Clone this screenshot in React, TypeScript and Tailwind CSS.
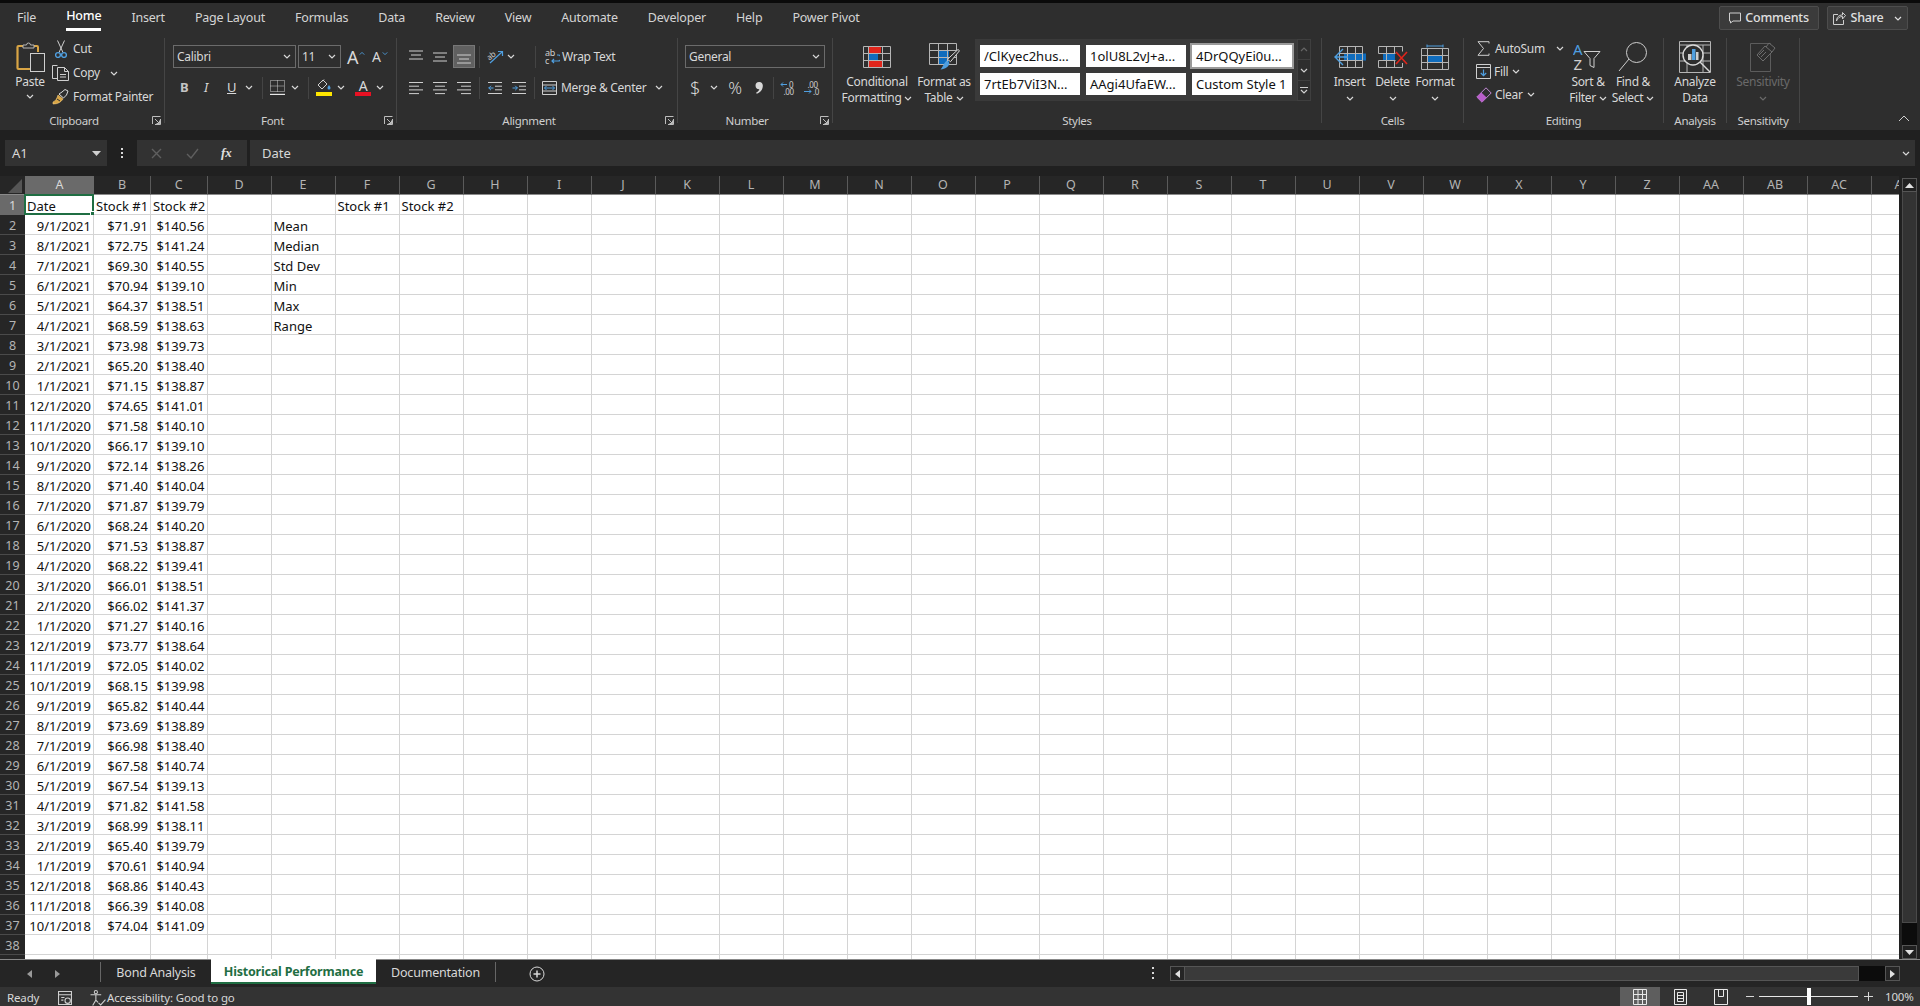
import React from 'react';

const rows: [string, string, string][] = [
  ['9/1/2021', '$71.91', '$140.56'], ['8/1/2021', '$72.75', '$141.24'], ['7/1/2021', '$69.30', '$140.55'],
  ['6/1/2021', '$70.94', '$139.10'], ['5/1/2021', '$64.37', '$138.51'], ['4/1/2021', '$68.59', '$138.63'],
  ['3/1/2021', '$73.98', '$139.73'], ['2/1/2021', '$65.20', '$138.40'], ['1/1/2021', '$71.15', '$138.87'],
  ['12/1/2020', '$74.65', '$141.01'], ['11/1/2020', '$71.58', '$140.10'], ['10/1/2020', '$66.17', '$139.10'],
  ['9/1/2020', '$72.14', '$138.26'], ['8/1/2020', '$71.40', '$140.04'], ['7/1/2020', '$71.87', '$139.79'],
  ['6/1/2020', '$68.24', '$140.20'], ['5/1/2020', '$71.53', '$138.87'], ['4/1/2020', '$68.22', '$139.41'],
  ['3/1/2020', '$66.01', '$138.51'], ['2/1/2020', '$66.02', '$141.37'], ['1/1/2020', '$71.27', '$140.16'],
  ['12/1/2019', '$73.77', '$138.64'], ['11/1/2019', '$72.05', '$140.02'], ['10/1/2019', '$68.15', '$139.98'],
  ['9/1/2019', '$65.82', '$140.44'], ['8/1/2019', '$73.69', '$138.89'], ['7/1/2019', '$66.98', '$138.40'],
  ['6/1/2019', '$67.58', '$140.74'], ['5/1/2019', '$67.54', '$139.13'], ['4/1/2019', '$71.82', '$141.58'],
  ['3/1/2019', '$68.99', '$138.11'], ['2/1/2019', '$65.40', '$139.79'], ['1/1/2019', '$70.61', '$140.94'],
  ['12/1/2018', '$68.86', '$140.43'], ['11/1/2018', '$66.39', '$140.08'], ['10/1/2018', '$74.04', '$141.09'],
];

const statsLabels = ['Mean', 'Median', 'Std Dev', 'Min', 'Max', 'Range'];
const tabs = ['File', 'Home', 'Insert', 'Page Layout', 'Formulas', 'Data', 'Review', 'View', 'Automate', 'Developer', 'Help', 'Power Pivot'];
const columns = ['A','B','C','D','E','F','G','H','I','J','K','L','M','N','O','P','Q','R','S','T','U','V','W','X','Y','Z','AA','AB','AC','AD'];

// small dropdown caret used all over the ribbon
const Chev = ({ className = '' }: { className?: string }) => (
  <svg width="8" height="5" viewBox="0 0 8 5" className={`shrink-0 ${className}`}>
    <path d="M1 1l3 3 3-3" stroke="currentColor" fill="none" strokeWidth="1.2" />
  </svg>
);

const Launcher = () => (
  <svg width="9" height="9" viewBox="0 0 9 9" className="absolute right-[3px] bottom-[5px] text-[#bdbdbd]">
    <path d="M0.5 8V0.5H8.5M8.5 3V8.5H3M3 3l4.5 4.5M7.5 4.5v3h-3" stroke="currentColor" fill="none" />
  </svg>
);

const Sep = () => <div className="w-px my-[7px] bg-[#454545] shrink-0" />;
const VSep = ({ className = '' }: { className?: string }) => <div className={`w-px h-[22px] bg-[#444] shrink-0 ${className}`} />;

const Group = ({ label, launcher, className, children }: { label: string; launcher?: boolean; className: string; children: React.ReactNode }) => (
  <div className={`relative flex flex-col shrink-0 ${className}`}>
    <div className="h-[81px]">{children}</div>
    <div className={`h-[18px] leading-[18px] text-center text-[11.5px] text-[#cfcfcf] ${launcher ? 'pr-[16px]' : ''}`}>{label}</div>
    {launcher && <Launcher />}
  </div>
);

const Big = ({ icon, line1, line2, chev, className = '', dim }: { icon: React.ReactNode; line1: string; line2?: string; chev?: boolean; className?: string; dim?: boolean }) => (
  <div className={`flex flex-col items-center shrink-0 ${dim ? 'text-[#6a6a6a]' : 'text-[#d8d8d8]'} ${className}`}>
    <div className="h-[35px] mt-[8px] flex items-center justify-center">{icon}</div>
    <div className="h-[16px] leading-[16px] text-[12px] whitespace-nowrap">{line1}</div>
    <div className="h-[16px] leading-[16px] text-[12px] whitespace-nowrap flex items-center gap-[3px]">
      {line2}
      {chev && <Chev />}
    </div>
  </div>
);

const Combo = ({ text, className }: { text: string; className: string }) => (
  <div className={`h-[23px] flex items-center justify-between pl-[3px] pr-[4px] border border-[#6b6b6b] text-[12px] text-[#d8d8d8] ${className}`}>
    <span>{text}</span>
    <Chev />
  </div>
);

const Lines = ({ widths, aligned }: { widths: number[]; aligned: 'l' | 'c' | 'r' }) => (
  <svg width="14" height="14" viewBox="0 0 14 14" className="shrink-0">
    {widths.map((w, i) => {
      const x = aligned === 'l' ? 0 : aligned === 'r' ? 14 - w : (14 - w) / 2;
      return <path key={i} d={`M${x} ${1.5 + i * 3.7}h${w}`} stroke="#cfcfcf" />;
    })}
  </svg>
);

const VAlign = ({ y }: { y: number }) => (
  <svg width="14" height="14" viewBox="0 0 14 14" className="shrink-0">
    <path d={`M0 ${y}h14M2 ${y + 4}h10M0 ${y + 8}h14`} stroke="#cfcfcf" />
  </svg>
);

const PasteIcon = () => (
  <svg width="30" height="32" viewBox="0 0 30 32" className="shrink-0">
    <path d="M8 5H3.5a1 1 0 0 0-1 1v21a1 1 0 0 0 1 1H15" stroke="#d9a545" strokeWidth="2.2" fill="none" />
    <path d="M19 5h3a1 1 0 0 1 1 1v5" stroke="#d9a545" strokeWidth="2" fill="none" />
    <path d="M8 7V4h3.5a2 2 0 0 1 4 0H19v3z" stroke="#b5b5b5" fill="#2e2e2e" />
    <rect x="15.5" y="12.5" width="14" height="18" stroke="#cfcfcf" fill="#2e2e2e" />
  </svg>
);

const CutIcon = () => (
  <svg width="12" height="18" viewBox="0 0 12 18" className="shrink-0">
    <path d="M2.5 0.5l5.5 12M9.5 0.5l-5.5 12" stroke="#cfcfcf" fill="none" />
    <circle cx="3" cy="15" r="2.4" stroke="#4f9fe0" fill="none" strokeWidth="1.4" />
    <circle cx="9" cy="15" r="2.4" stroke="#4f9fe0" fill="none" strokeWidth="1.4" />
  </svg>
);

const CopyIcon = () => (
  <svg width="17" height="16" viewBox="0 0 17 16" className="shrink-0">
    <path d="M5.5 0.5H0.5V13.5H5" stroke="#cfcfcf" fill="none" />
    <path d="M5.5 2.5h7l4 4v9h-11zM12.5 2.5v4h4M8 9.5h6M8 12h6" stroke="#cfcfcf" fill="none" />
  </svg>
);

const PainterIcon = () => (
  <svg width="17" height="16" viewBox="0 0 17 16" className="shrink-0">
    <path d="M1 13c3-1 4-4 5-7l5 4c-2 3-5 5-10 5z" fill="#d9a545" stroke="#f0c878" strokeWidth="0.6" />
    <path d="M7 5l3-2 3-2.5 3 1.5-1.5 4-3 3z" stroke="#dcdcdc" fill="#2e2e2e" />
    <path d="M5 10l3 2" stroke="#2e2e2e" />
  </svg>
);

const BordersIcon = () => (
  <svg width="15" height="15" viewBox="0 0 15 15" className="shrink-0">
    <path d="M0.5 0.5h14v11H0.5zM7.5 0.5v11M0.5 6h14" stroke="#cfcfcf" strokeDasharray="1 1" fill="none" />
    <path d="M0 14.5h15" stroke="#e8e8e8" strokeWidth="1.4" />
  </svg>
);

const FillIcon = () => (
  <svg width="16" height="17" viewBox="0 0 16 17" className="shrink-0">
    <path d="M7 1l-5 5 4 4 5-5zM8 0.5l-2 2" stroke="#cfcfcf" fill="none" />
    <path d="M13 6c1 1.5 1.5 2.2 1.5 3a1.5 1.5 0 0 1-3 0c0-.8.5-1.5 1.5-3z" fill="#4f9fe0" />
    <rect x="0" y="13" width="16" height="4" fill="#ffe600" />
  </svg>
);

const FontColorIcon = () => (
  <div className="w-[16px] h-[17px] flex flex-col items-center shrink-0">
    <span className="text-[14px] leading-[13px] text-[#d8d8d8]">A</span>
    <div className="w-[16px] h-[4px] bg-[#e81123]" />
  </div>
);

const OrientIcon = () => (
  <svg width="17" height="16" viewBox="0 0 17 16" className="shrink-0">
    <text x="0" y="9" fontSize="8" fill="#cfcfcf" transform="rotate(-38 5 7)" fontFamily="Noto Sans">ab</text>
    <path d="M3 14L15 3M11 2.5h4.5V7" stroke="#4f9fe0" fill="none" strokeWidth="1.2" />
  </svg>
);

const WrapIcon = () => (
  <svg width="15" height="17" viewBox="0 0 15 17" className="shrink-0">
    <text x="0" y="7.5" fontSize="9" fill="#cfcfcf" fontFamily="Noto Sans">ab</text>
    <text x="0" y="16" fontSize="9" fill="#cfcfcf" fontFamily="Noto Sans">c</text>
    <path d="M12 7h1a2 2 0 0 1 0 6H7M9 11l-2 2 2 2" stroke="#4f9fe0" fill="none" strokeWidth="1.2" />
  </svg>
);

const MergeIcon = () => (
  <svg width="15" height="14" viewBox="0 0 15 14" className="shrink-0">
    <path d="M0.5 0.5h14v13H0.5zM0.5 4h14M0.5 10h14" stroke="#cfcfcf" fill="none" />
    <path d="M2.5 7h10M4.5 5l-2 2 2 2M10.5 5l2 2-2 2" stroke="#4f9fe0" fill="none" />
  </svg>
);

const IndentIcon = ({ dir }: { dir: 'dec' | 'inc' }) => (
  <svg width="14" height="14" viewBox="0 0 14 14" className="shrink-0">
    <path d="M0 1.5h14M0 12.5h14M7 5.2h7M7 8.8h7" stroke="#cfcfcf" />
    <path d={dir === 'dec' ? 'M0.5 7h5M3 4.8L0.8 7 3 9.2' : 'M0.5 7h5M3.2 4.8L5.4 7 3.2 9.2'} stroke="#4f9fe0" fill="none" />
  </svg>
);

const DecimalIcon = ({ mode }: { mode: 'inc' | 'dec' }) => (
  <svg width="19" height="16" viewBox="0 0 19 16" className="shrink-0">
    {mode === 'inc' ? (
      <>
        <path d="M7 4.5H1M3 2.5l-2 2 2 2" stroke="#4f9fe0" fill="none" />
        <text x="9" y="7.5" fontSize="8" fill="#cfcfcf" fontFamily="Noto Sans">0</text>
        <text x="3.5" y="15" fontSize="8" fill="#cfcfcf" fontFamily="Noto Sans">.00</text>
      </>
    ) : (
      <>
        <text x="3.5" y="7.5" fontSize="8" fill="#cfcfcf" fontFamily="Noto Sans">.00</text>
        <path d="M0 11.5h7M5 9.5l2 2-2 2" stroke="#4f9fe0" fill="none" />
        <text x="9" y="15" fontSize="8" fill="#cfcfcf" fontFamily="Noto Sans">.0</text>
      </>
    )}
  </svg>
);

const CondIcon = () => (
  <svg width="28" height="22" viewBox="0 0 28 22">
    <rect x="5" y="0" width="13" height="7.5" fill="#e1251b" />
    <rect x="5" y="7.5" width="10" height="7" fill="#0f6cbd" />
    <rect x="5" y="14.5" width="15" height="7.5" fill="#e1251b" />
    <path d="M0.5 0.5h27v21H0.5zM0.5 7.5h27M0.5 14.5h27M5.5 0.5v21M19.5 0.5v21" stroke="#b5b5b5" fill="none" />
  </svg>
);

const TableIcon = () => (
  <svg width="31" height="28" viewBox="0 0 31 28">
    <rect x="10" y="8" width="10" height="13" fill="#0f6cbd" />
    <path d="M0.5 0.5h27v21H0.5zM0.5 7.5h27M0.5 14.5h27M9.5 0.5v21M18.5 0.5v21" stroke="#b5b5b5" fill="none" />
    <path d="M29 6.5l1.5 1.2-9 11-3-2.4z" fill="#2e2e2e" stroke="#d8d8d8" />
    <path d="M17.5 17.5l3 2.5c-1 4-4 6-9 6.5 2-2 3-6 6-9z" fill="#4f9fe0" />
  </svg>
);

const GridBase = () => <path d="M5.5 0.5h23v21h-23zM5.5 7.5h23M5.5 14.5h23M13.5 0.5v21M21.5 0.5v21" stroke="#b5b5b5" fill="none" />;

const InsertIcon = () => (
  <svg width="32" height="22" viewBox="0 0 32 22">
    <rect x="10" y="7.5" width="22" height="7" fill="#0f6cbd" />
    <GridBase />
    <path d="M9 3L1 11l8 8M1 11h13" stroke="#4f9fe0" fill="none" strokeWidth="1.4" />
  </svg>
);

const DeleteIcon = () => (
  <svg width="30" height="22" viewBox="0 0 30 22">
    <rect x="5" y="7.5" width="12" height="7" fill="#0f6cbd" />
    <path d="M0.5 0.5h24M0.5 21.5h24M0.5 0.5v7M0.5 14.5v7M24.5 0.5v5M24.5 17v4.5M0.5 7.5h17M0.5 14.5h17M8.5 0.5v21M16.5 0.5v7M16.5 14.5v7" stroke="#b5b5b5" fill="none" />
    <path d="M18 6l11 12M29 6L18 18" stroke="#e1251b" strokeWidth="1.6" />
  </svg>
);

const FormatIcon = () => (
  <svg width="28" height="26" viewBox="0 0 28 26">
    <path d="M6 0.5v3M22 0.5v3M6 2h16" stroke="#4f9fe0" />
    <rect x="7" y="11.5" width="14" height="7" fill="#0f6cbd" />
    <path d="M0.5 4.5h27v21H0.5zM0.5 11.5h27M0.5 18.5h27M6.5 4.5v21M21.5 4.5v21" stroke="#b5b5b5" fill="none" />
  </svg>
);

const SumIcon = () => (
  <svg width="13" height="15" viewBox="0 0 13 15" className="shrink-0">
    <path d="M12 2.5V0.7H1l5.5 6.8L1 14.3h11v-1.8" stroke="#cfcfcf" fill="none" />
  </svg>
);

const FillDownIcon = () => (
  <svg width="15" height="15" viewBox="0 0 15 15" className="shrink-0">
    <path d="M0.5 0.5h14v14H0.5zM0.5 3.5h14" stroke="#cfcfcf" fill="none" />
    <path d="M7.5 5.5v6M4.8 9l2.7 2.7L10.2 9" stroke="#4f9fe0" fill="none" strokeWidth="1.2" />
  </svg>
);

const ClearIcon = () => (
  <svg width="16" height="16" viewBox="0 0 16 16" className="shrink-0">
    <path d="M10 0.8L15.2 6 6 15.2 0.8 10z" fill="#2e2e2e" stroke="#c38ad6" />
    <path d="M0.8 10l4.6-4.6 5.2 5.2L6 15.2z" fill="#b85ec9" />
  </svg>
);

const SortIcon = () => (
  <svg width="30" height="30" viewBox="0 0 30 30">
    <text x="0" y="13" fontSize="15" fill="#4f9fe0" fontFamily="Noto Sans">A</text>
    <text x="0.5" y="28" fontSize="15" fill="#cfcfcf" fontFamily="Noto Sans">Z</text>
    <path d="M11 9.5h16l-6 7v9l-4-2v-7z" stroke="#cfcfcf" fill="none" />
  </svg>
);

const FindIcon = () => (
  <svg width="30" height="31" viewBox="0 0 30 31">
    <circle cx="18.5" cy="11.5" r="10" stroke="#cfcfcf" fill="none" />
    <path d="M11 18L1 30" stroke="#cfcfcf" />
  </svg>
);

const AnalyzeIcon = () => (
  <svg width="32" height="32" viewBox="0 0 32 32">
    <path d="M0.5 0.5h31v31H0.5zM0.5 4h31M0.5 12h31M0.5 20h31M8 4v27M24 4v27" stroke="#b5b5b5" fill="none" />
    <circle cx="14" cy="14" r="10" fill="#2e2e2e" stroke="#d8d8d8" strokeWidth="1.4" />
    <rect x="9" y="13" width="3.5" height="6" fill="#cfcfcf" />
    <rect x="13" y="8" width="3.5" height="11" fill="#4f9fe0" />
    <rect x="17" y="11" width="2.5" height="8" fill="#cfcfcf" />
    <path d="M21 21l10 10" stroke="#d8d8d8" strokeWidth="1.4" />
  </svg>
);

const SensitivityIcon = () => (
  <svg width="27" height="33" viewBox="0 0 27 33">
    <path d="M0.5 3.5h20v28H0.5z" stroke="#5c5c5c" fill="none" />
    <path d="M7 15l8-9 7 6-9 9zM16 7l3-4 6 5-3 4" stroke="#6e6e6e" fill="#2e2e2e" />
    <path d="M9 15l5-5M11 17l5-5" stroke="#6e6e6e" />
  </svg>
);

const CommaIcon = () => (
  <svg width="8" height="12" viewBox="0 0 8 12" className="shrink-0">
    <path d="M4 0a3.6 3.6 0 0 1 3.8 4c0 3.5-2.5 6.5-6 7.8L1 10.8C3 9.5 4 8.5 4.3 7.2A3.6 3.6 0 0 1 4 0z" fill="#d8d8d8" />
  </svg>
);

const SmallAction = ({ icon, label, chev, className = '' }: { icon: React.ReactNode; label: string; chev?: boolean; className?: string }) => (
  <div className={`h-[23px] flex items-center text-[12px] text-[#d8d8d8] whitespace-nowrap ${className}`}>
    {icon}
    <span className="ml-[3px]">{label}</span>
    {chev && <Chev className="ml-[4px]" />}
  </div>
);

const StyleCell = ({ text, selected }: { text: string; selected?: boolean }) => (
  <div className={`w-[100px] h-[22px] bg-white text-[#111] text-[13px] tracking-normal leading-[22px] px-[4px] whitespace-nowrap overflow-hidden ${selected ? 'outline-2 outline-[#9a9a9a]' : ''}`}>
    {text}
  </div>
);

const Ribbon = () => (
  <div className="h-[99px] bg-[#2e2e2e] flex shrink-0">
    <Group label="Clipboard" launcher className="w-[164px]">
      <div className="flex pl-[15px] h-full">
        <div className="flex flex-col items-center w-[30px] pt-[10px] text-[12px] text-[#d8d8d8]">
          <PasteIcon />
          <span className="mt-[1px] leading-[16px]">Paste</span>
          <Chev className="mt-[4px]" />
        </div>
        <div className="flex flex-col ml-[7px] pt-[5px]">
          <SmallAction icon={<div className="w-[18px] flex justify-center"><CutIcon /></div>} label="Cut" className="h-[25px]" />
          <div className="h-[24px] flex items-center text-[12px] text-[#d8d8d8]">
            <div className="w-[18px]"><CopyIcon /></div>
            <span className="ml-[3px]">Copy</span>
            <Chev className="ml-[10px]" />
          </div>
          <SmallAction icon={<div className="w-[18px]"><PainterIcon /></div>} label="Format Painter" className="h-[24px]" />
        </div>
      </div>
    </Group>
    <Sep />
    <Group label="Font" launcher className="w-[231px]">
      <div className="flex flex-col pt-[14px] pl-[8px] gap-[8px] text-[#d8d8d8]">
        <div className="flex items-center h-[23px]">
          <Combo text="Calibri" className="w-[123px]" />
          <Combo text="11" className="w-[43px] ml-[2px]" />
          <div className="ml-[6px] w-[15px] flex items-start">
            <span className="text-[18px] leading-none tracking-normal">A</span>
            <Chev className="rotate-180 text-[#4f9fe0] -ml-[1px] mt-[3px] scale-75" />
          </div>
          <div className="ml-[10px] w-[15px] flex items-start">
            <span className="text-[14px] leading-none tracking-normal">A</span>
            <Chev className="text-[#4f9fe0] mt-[1px] scale-75" />
          </div>
        </div>
        <div className="flex items-center h-[23px] text-[13px]">
          <span className="ml-[7px] w-[9px] font-bold text-[#c4c4c4]">B</span>
          <span className="ml-[15px] w-[8px] italic">I</span>
          <span className="ml-[15px] w-[10px] underline">U</span>
          <Chev className="ml-[8px]" />
          <VSep className="ml-[9px]" />
          <div className="ml-[7px]"><BordersIcon /></div>
          <Chev className="ml-[6px]" />
          <VSep className="ml-[9px]" />
          <div className="ml-[7px]"><FillIcon /></div>
          <Chev className="ml-[5px]" />
          <div className="ml-[10px]"><FontColorIcon /></div>
          <Chev className="ml-[5px]" />
        </div>
      </div>
    </Group>
    <Sep />
    <Group label="Alignment" launcher className="w-[280px]">
      <div className="flex flex-col pt-[14px] pl-[12px] gap-[8px] text-[#d8d8d8]">
        <div className="flex items-center h-[23px] text-[12px]">
          <VAlign y={1} />
          <div className="ml-[10px]"><VAlign y={3} /></div>
          <div className="ml-[6px] w-[22px] h-[23px] bg-[#606060] border border-[#777] flex items-center justify-center"><VAlign y={5} /></div>
          <VSep className="ml-[4px]" />
          <div className="ml-[7px]"><OrientIcon /></div>
          <Chev className="ml-[3px]" />
          <VSep className="ml-[20px]" />
          <div className="ml-[9px]"><WrapIcon /></div>
          <span className="ml-[2px]">Wrap Text</span>
        </div>
        <div className="flex items-center h-[23px] text-[12px]">
          <Lines widths={[14, 10, 14, 10]} aligned="l" />
          <div className="ml-[10px]"><Lines widths={[14, 10, 14, 10]} aligned="c" /></div>
          <div className="ml-[10px]"><Lines widths={[14, 10, 14, 10]} aligned="r" /></div>
          <VSep className="ml-[8px]" />
          <div className="ml-[8px]"><IndentIcon dir="dec" /></div>
          <div className="ml-[10px]"><IndentIcon dir="inc" /></div>
          <VSep className="ml-[8px]" />
          <div className="ml-[7px]"><MergeIcon /></div>
          <span className="ml-[4px]">Merge &amp; Center</span>
          <Chev className="ml-[9px]" />
        </div>
      </div>
    </Group>
    <Sep />
    <Group label="Number" launcher className="w-[154px]">
      <div className="flex flex-col pt-[14px] pl-[7px] gap-[8px] text-[#d8d8d8]">
        <Combo text="General" className="w-[140px]" />
        <div className="flex items-center h-[23px]">
          <span className="w-[20px] text-[18px] font-light leading-none text-center">$</span>
          <Chev className="ml-[5px]" />
          <span className="ml-[8px] w-[18px] text-[17px] font-light leading-none text-center">%</span>
          <div className="ml-[11px]"><CommaIcon /></div>
          <VSep className="ml-[10px]" />
          <div className="ml-[6px]"><DecimalIcon mode="inc" /></div>
          <div className="ml-[5px]"><DecimalIcon mode="dec" /></div>
        </div>
      </div>
    </Group>
    <Sep />
    <Group label="Styles" className="w-[488px]">
      <div className="flex pl-[11px] h-full">
        <Big icon={<CondIcon />} line1="Conditional" line2="Formatting" chev className="w-[66px]" />
        <Big icon={<TableIcon />} line1="Format as" line2="Table" chev className="w-[62px] ml-[3px]" />
        <div className="flex mt-[8px] h-[62px]">
          <div className="w-[322px] bg-[#3a3a3a] grid grid-cols-[100px_100px_100px] gap-x-[6px] gap-y-[6px] pl-[5px] pt-[6px] content-start">
            <StyleCell text="/ClKyec2hus..." />
            <StyleCell text="1olU8L2vJ+a..." />
            <StyleCell text="4DrQQyEi0u..." selected />
            <StyleCell text="7rtEb7ViI3N..." />
            <StyleCell text="AAgi4UfaEW..." />
            <StyleCell text="Custom Style 1" />
          </div>
          <div className="w-[14px] flex flex-col text-[#cfcfcf]">
            <div className="h-[21px] border border-[#3f3f3f] flex items-center justify-center text-[#666]"><Chev className="rotate-180" /></div>
            <div className="h-[20px] border-x border-[#3f3f3f] flex items-center justify-center"><Chev /></div>
            <div className="h-[21px] border border-[#3f3f3f] flex flex-col items-center justify-center gap-[1px]"><div className="w-[8px] h-px bg-[#cfcfcf]" /><Chev /></div>
          </div>
        </div>
      </div>
    </Group>
    <Sep />
    <Group label="Cells" className="w-[141px]">
      <div className="flex pl-[6px]">
        <Big icon={<InsertIcon />} line1="Insert" chev className="w-[43px]" />
        <Big icon={<DeleteIcon />} line1="Delete" chev className="w-[43px]" />
        <Big icon={<FormatIcon />} line1="Format" chev className="w-[42px]" />
      </div>
    </Group>
    <Sep />
    <Group label="Editing" className="w-[199px]">
      <div className="flex pl-[12px]">
        <div className="flex flex-col pt-[6px] w-[89px]">
          <div className="h-[23px] flex items-center text-[12px] text-[#d8d8d8]">
            <div className="w-[17px] pl-[1px]"><SumIcon /></div>
            <span className="ml-[2px]">AutoSum</span>
            <Chev className="ml-[11px]" />
          </div>
          <SmallAction icon={<FillDownIcon />} label="Fill" chev />
          <SmallAction icon={<ClearIcon />} label="Clear" chev />
        </div>
        <Big icon={<SortIcon />} line1="Sort &" line2="Filter" chev className="w-[46px]" />
        <Big icon={<FindIcon />} line1="Find &" line2="Select" chev className="w-[44px]" />
      </div>
    </Group>
    <Sep />
    <Group label="Analysis" className="w-[62px]">
      <Big icon={<AnalyzeIcon />} line1="Analyze" line2="Data" className="w-[62px]" />
    </Group>
    <Sep />
    <Group label="Sensitivity" className="w-[72px]">
      <Big icon={<SensitivityIcon />} line1="Sensitivity" chev dim className="w-[72px]" />
    </Group>
    <Sep />
    <div className="ml-auto self-end pb-[8px] pr-[10px] text-[#cfcfcf]">
      <svg width="12" height="7" viewBox="0 0 12 7"><path d="M1 6l5-5 5 5" stroke="currentColor" fill="none" /></svg>
    </div>
  </div>
);

const FormulaBar = () => (
  <div className="h-[46px] bg-[#202020] shrink-0 flex items-start pt-[10px] px-[5px] text-[13px] text-[#d8d8d8] tracking-normal">
    <div className="w-[102px] h-[26px] bg-[#323232] flex items-center justify-between pl-[7px] pr-[6px]">
      <span className="pt-[1px]">A1</span>
      <svg width="9" height="5" viewBox="0 0 9 5"><path d="M0 0h9L4.5 5z" fill="#cfcfcf" /></svg>
    </div>
    <div className="w-[30px] h-[26px] flex flex-col items-center justify-center gap-[2px]">
      <div className="w-[2px] h-[2px] bg-[#d8d8d8]" />
      <div className="w-[2px] h-[2px] bg-[#d8d8d8]" />
      <div className="w-[2px] h-[2px] bg-[#d8d8d8]" />
    </div>
    <div className="w-[110px] h-[26px] bg-[#323232] flex items-center">
      <svg width="11" height="11" viewBox="0 0 11 11" className="ml-[14px]"><path d="M1 1l9 9M10 1l-9 9" stroke="#5f5f5f" strokeWidth="1.4" /></svg>
      <svg width="13" height="11" viewBox="0 0 13 11" className="ml-[24px]"><path d="M1 6l4 4 7-9" stroke="#5f5f5f" strokeWidth="1.4" fill="none" /></svg>
      <span className="ml-[22px] font-['Liberation_Serif',serif] italic font-bold text-[13px] text-[#e0e0e0]">fx</span>
    </div>
    <div className="ml-[3px] flex-1 h-[26px] bg-[#323232] flex items-center justify-between pl-[12px] pr-[5px]">
      <span className="pt-[1px]">Date</span>
      <Chev />
    </div>
  </div>
);

const Sheet = () => {
  const allRows = Array.from({ length: 39 }, (_, i) => i);
  return (
    <div className="flex-1 min-h-0 flex overflow-hidden bg-[#202020]">
      <div className="flex-1 min-w-0 overflow-hidden">
        <div className="grid grid-cols-[25px_69px_57px_56.5px_repeat(27,64px)] grid-rows-[19px] auto-rows-[20px] w-max text-[13px] text-[#111] tracking-normal">
          <div className="bg-[#262626] relative border-b border-[#8a8a8a]">
            <svg width="14" height="14" viewBox="0 0 14 14" className="absolute left-[8px] top-[3px]"><path d="M14 0v14H0z" fill="#555" /></svg>
          </div>
          {columns.map((c, i) => (
            <div
              key={c}
              className={i === 0
                ? 'bg-[#6a6a6a] text-[#d8d8d8] text-[12.5px] pt-[1px] flex items-center justify-center border-b border-[#8a8a8a]'
                : 'bg-[#262626] text-[#b4b4b4] text-[12.5px] pt-[1px] flex items-center justify-center border-r border-b border-r-[#5a5a5a] border-b-[#8a8a8a]'}
            >
              {c}
            </div>
          ))}
          {allRows.map((r) => (
            <React.Fragment key={r}>
              <div className={r === 0
                ? 'bg-[#6a6a6a] text-[#d8d8d8] text-[12.5px] pt-[3px] flex items-center justify-center'
                : 'bg-[#262626] text-[#b4b4b4] text-[12.5px] pt-[3px] flex items-center justify-center border-b border-[#4a4a4a]'}>
                {r + 1}
              </div>
              {columns.map((c, i) => {
                let text = '';
                let right = false;
                if (r === 0) {
                  if (c === 'A') text = 'Date';
                  if (c === 'B' || c === 'F') text = 'Stock #1';
                  if (c === 'C' || c === 'G') text = 'Stock #2';
                } else if (rows[r - 1] && i < 3) {
                  text = rows[r - 1][i];
                  right = true;
                } else if (c === 'E' && statsLabels[r - 1]) {
                  text = statsLabels[r - 1];
                }
                const selected = r === 0 && i === 0;
                return (
                  <div
                    key={c}
                    className={`relative bg-white border-r border-b border-[#d4d4d4] leading-[22px] whitespace-nowrap ${right ? 'text-right pr-[2px]' : 'pl-[2px]'}`}
                  >
                    {text}
                    {selected && (
                      <>
                        <div className="absolute -left-px -top-px -right-px -bottom-px border-2 border-[#1f6e43]" />
                        <div className="absolute -right-[3px] -bottom-[3px] w-[6px] h-[6px] bg-[#1f6e43] border border-white" />
                      </>
                    )}
                  </div>
                );
              })}
            </React.Fragment>
          ))}
        </div>
      </div>
      <div className="w-[21px] shrink-0 pl-[3px] pr-[3px] pt-[2px] flex flex-col bg-[#202020]">
        <div className="h-[14px] border border-[#555] flex items-center justify-center">
          <svg width="9" height="5" viewBox="0 0 9 5"><path d="M0 5h9L4.5 0z" fill="#e0e0e0" /></svg>
        </div>
        <div className="flex-1 bg-[#333] border-x border-b border-[#4a4a4a]" />
        <div className="h-[22px] bg-[#0c0c0c]" />
        <div className="h-[14px] border border-[#555] flex items-center justify-center">
          <svg width="9" height="5" viewBox="0 0 9 5"><path d="M0 0h9L4.5 5z" fill="#e0e0e0" /></svg>
        </div>
      </div>
    </div>
  );
};

const SheetTabs = () => (
  <div className="h-[28px] bg-[#252525] shrink-0 flex text-[12.5px] tracking-[-0.2px] text-[#d8d8d8] border-t border-[#888]">
    <div className="w-[100px] flex items-center">
      <svg width="5" height="8" viewBox="0 0 5 8" className="ml-[27px]"><path d="M5 0v8L0 4z" fill="#9a9a9a" /></svg>
      <svg width="5" height="8" viewBox="0 0 5 8" className="ml-[23px]"><path d="M0 0v8l5-4z" fill="#9a9a9a" /></svg>
    </div>
    <div className="w-px h-[20px] mt-[2px] bg-[#666]" />
    <div className="w-[110px] flex items-center justify-center">Bond Analysis</div>
    <div className="w-[165px] h-[25px] -mt-px pt-[3px] bg-white border-b-2 border-[#1f6e43] flex items-center justify-center font-bold text-[#1f6e43]">Historical Performance</div>
    <div className="w-[119px] flex items-center justify-center">Documentation</div>
    <div className="w-px h-[20px] mt-[2px] bg-[#666]" />
    <div className="w-[82px] flex items-center justify-center">
      <svg width="16" height="16" viewBox="0 0 16 16"><circle cx="8" cy="8" r="7" stroke="#d8d8d8" fill="none" /><path d="M8 4.5v7M4.5 8h7" stroke="#d8d8d8" strokeWidth="1.5" /></svg>
    </div>
    <div className="ml-[574px] w-[3px] mt-[7px] flex flex-col gap-[3px]">
      <div className="w-[2px] h-[2px] bg-[#d8d8d8]" />
      <div className="w-[2px] h-[2px] bg-[#d8d8d8]" />
      <div className="w-[2px] h-[2px] bg-[#d8d8d8]" />
    </div>
    <div className="ml-[15px] w-[730px] h-[15px] mt-[6px] flex">
      <div className="w-[15px] border border-[#555] flex items-center justify-center">
        <svg width="5" height="8" viewBox="0 0 5 8"><path d="M5 0v8L0 4z" fill="#e0e0e0" /></svg>
      </div>
      <div className="flex-1 bg-[#3a3a3a] border-y border-r border-[#555]" />
      <div className="w-[26px] bg-[#0c0c0c]" />
      <div className="w-[15px] border border-[#555] flex items-center justify-center">
        <svg width="5" height="8" viewBox="0 0 5 8"><path d="M0 0v8l5-4z" fill="#e0e0e0" /></svg>
      </div>
    </div>
  </div>
);

const StatusBar = () => (
  <div className="h-[19px] bg-[#333] shrink-0 flex items-center text-[11.5px] tracking-[-0.15px] text-[#d8d8d8]">
    <span className="ml-[7px] w-[40px] mt-[3px]">Ready</span>
    <svg width="14" height="14" viewBox="0 0 13 13" className="ml-[11px] mt-[3px]">
      <path d="M0.5 0.5h12v12H0.5zM0.5 3.5h12M3 6h3M3 8.5h2" stroke="#cfcfcf" fill="none" />
      <circle cx="9" cy="9" r="2.5" stroke="#cfcfcf" fill="none" />
    </svg>
    <svg width="16" height="16" viewBox="0 0 15 15" className="ml-[18px] mt-[2px]">
      <circle cx="5.5" cy="2" r="1.5" stroke="#cfcfcf" fill="none" />
      <path d="M0.5 4.5h10M5.5 4.5v5l-3 5M5.5 9.5l2 2" stroke="#cfcfcf" fill="none" />
      <path d="M8 12l2 2 4.5-5" stroke="#cfcfcf" fill="none" />
    </svg>
    <span className="ml-[1px] mt-[3px]">Accessibility: Good to go</span>
    <div className="ml-auto flex items-center h-full">
      <div className="w-[40px] h-full bg-[#5e5e5e] flex items-center justify-center">
        <svg width="14" height="16" viewBox="0 0 14 16"><path d="M0.5 0.5h13v15H0.5zM0.5 5.5h13M0.5 10.5h13M5 0.5v15M9.5 0.5v15" stroke="#e8e8e8" fill="none" /></svg>
      </div>
      <div className="w-[41px] flex justify-center">
        <svg width="13" height="16" viewBox="0 0 13 16"><path d="M0.5 0.5h12v15H0.5zM3.5 3.5h6v9h-6zM3.5 6.5h6M3.5 9.5h6" stroke="#e8e8e8" fill="none" /></svg>
      </div>
      <div className="w-[40px] flex justify-center">
        <svg width="14" height="16" viewBox="0 0 14 16"><path d="M0.5 0.5h13v15H0.5zM4.5 0.5v7h5V0.5" stroke="#e8e8e8" fill="none" /></svg>
      </div>
      <div className="ml-[5px] w-[8px] h-px bg-[#d8d8d8]" />
      <div className="ml-[5px] w-[99px] h-px bg-[#e8e8e8] relative">
        <div className="absolute left-[48px] -top-[8px] w-[4px] h-[17px] bg-white" />
      </div>
      <svg width="9" height="9" viewBox="0 0 9 9" className="ml-[6px]"><path d="M0 4.5h9M4.5 0v9" stroke="#d8d8d8" /></svg>
      <span className="ml-[12px] mr-[8px] w-[27px] whitespace-nowrap">100%</span>
    </div>
  </div>
);

export default function App() {
  return (
    <div className="w-[1920px] h-[1006px] overflow-hidden flex flex-col bg-[#202020] tracking-[-0.3px] font-['Noto_Sans','Liberation_Sans',sans-serif]">
      <div className="h-[3px] bg-[#0a0a0a] shrink-0" />
      <div className="h-[28px] bg-[#2e2e2e] shrink-0 flex items-stretch pl-[2px] text-[12.5px] tracking-[-0.2px] text-[#d4d4d4]">
        {tabs.map((t) => (
          <div key={t} className={t === 'Home'
            ? 'px-[15px] flex items-center pt-[2px] border-b-[3px] border-transparent text-white font-medium relative'
            : 'px-[15px] flex items-center pt-[2px]'}>
            {t}
            {t === 'Home' && <div className="absolute left-[15px] right-[15px] bottom-[-3px] h-[3px] bg-white" />}
          </div>
        ))}
        <div className="ml-auto flex items-start pt-[3px] pr-[12px]">
          <div className="w-[100px] h-[24px] bg-[#3b3b3b] border border-[#4d4d4d] rounded-[2px] flex items-center justify-center gap-[4px] font-medium text-[#e0e0e0]">
            <svg width="12" height="12" viewBox="0 0 12 12"><path d="M0.5 1h11v8H4L1.5 11V9h-1z" stroke="#cfcfcf" fill="none" /></svg>
            Comments
          </div>
          <div className="ml-[8px] w-[81px] h-[24px] bg-[#3b3b3b] border border-[#4d4d4d] rounded-[2px] flex items-center justify-center gap-[4px] font-medium text-[#e0e0e0]">
            <svg width="13" height="13" viewBox="0 0 13 13"><path d="M5 2.5H0.5v10h10V8M3.5 9c1-3 3-4.5 6-4.5V7l3-3.5-3-3V3c-4 0-6 2.5-6 6z" stroke="#cfcfcf" fill="none" /></svg>
            Share
            <Chev className="ml-[6px]" />
          </div>
        </div>
      </div>
      <Ribbon />
      <FormulaBar />
      <Sheet />
      <SheetTabs />
      <StatusBar />
    </div>
  );
}
